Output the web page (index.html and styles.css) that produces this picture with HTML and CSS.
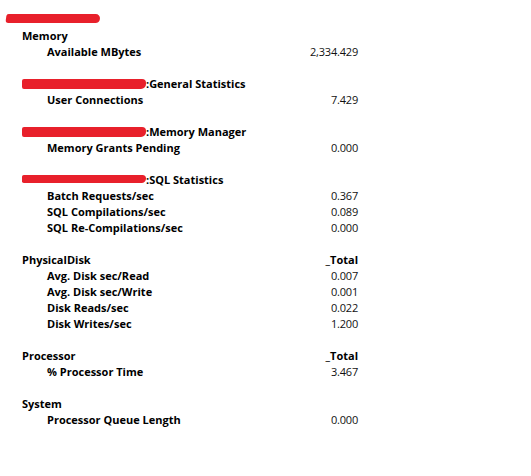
FILE: index.html
```html
<!DOCTYPE html>
<html>
<head>
<meta charset="utf-8">
<link rel="stylesheet" href="styles.css">
</head>
<body>
<div class="report">
  <div class="machine"><span class="redact r-machine"></span></div>

  <div class="objects">
    <section class="obj">
      <div class="row head"><span class="name">Memory</span><span class="val"></span></div>
      <div class="row counter"><span class="name">Available MBytes</span><span class="val">2,334.429</span></div>
    </section>

    <section class="obj">
      <div class="row head"><span class="name"><span class="redact r-obj"></span>:General Statistics</span><span class="val"></span></div>
      <div class="row counter"><span class="name">User Connections</span><span class="val">7.429</span></div>
    </section>

    <section class="obj">
      <div class="row head"><span class="name"><span class="redact r-obj"></span>:Memory Manager</span><span class="val"></span></div>
      <div class="row counter"><span class="name">Memory Grants Pending</span><span class="val">0.000</span></div>
    </section>

    <section class="obj">
      <div class="row head"><span class="name"><span class="redact r-obj r-sql"></span>:SQL Statistics</span><span class="val"></span></div>
      <div class="row counter"><span class="name">Batch Requests/sec</span><span class="val">0.367</span></div>
      <div class="row counter"><span class="name">SQL Compilations/sec</span><span class="val">0.089</span></div>
      <div class="row counter"><span class="name">SQL Re-Compilations/sec</span><span class="val">0.000</span></div>
    </section>

    <section class="obj">
      <div class="row head"><span class="name">PhysicalDisk</span><span class="val inst">_Total</span></div>
      <div class="row counter"><span class="name">Avg. Disk sec/Read</span><span class="val">0.007</span></div>
      <div class="row counter"><span class="name">Avg. Disk sec/Write</span><span class="val">0.001</span></div>
      <div class="row counter"><span class="name">Disk Reads/sec</span><span class="val">0.022</span></div>
      <div class="row counter"><span class="name">Disk Writes/sec</span><span class="val">1.200</span></div>
    </section>

    <section class="obj">
      <div class="row head"><span class="name">Processor</span><span class="val inst">_Total</span></div>
      <div class="row counter"><span class="name">% Processor Time</span><span class="val">3.467</span></div>
    </section>

    <section class="obj">
      <div class="row head"><span class="name">System</span><span class="val"></span></div>
      <div class="row counter"><span class="name">Processor Queue Length</span><span class="val">0.000</span></div>
    </section>
  </div>
</div>
</body>
</html>
```

FILE: styles.css
```css
html, body {
  margin: 0;
  padding: 0;
  background: #ffffff;
}

body {
  font-family: "Open Sans", "Noto Sans", "DejaVu Sans", sans-serif;
  font-size: 11px;
  color: #000000;
}

.report {
  width: 358px;
  padding-top: 10px;
}

.machine {
  height: 16px;
  padding-left: 6px;
  margin-bottom: 2px;
  display: flex;
  align-items: center;
}

.objects {
  display: flex;
  flex-direction: column;
  gap: 16px;
}

.obj {
  display: flex;
  flex-direction: column;
}

.row {
  height: 16px;
  line-height: 16px;
  display: flex;
  justify-content: space-between;
  white-space: nowrap;
}

.name {
  font-weight: 700;
  display: flex;
  align-items: center;
}

.head .name {
  padding-left: 22px;
}

.counter .name {
  padding-left: 47px;
}

.val {
  font-weight: 400;
  color: #111;
  letter-spacing: -0.2px;
}

.val.inst {
  font-weight: 700;
  color: #000;
  letter-spacing: 0;
}

.redact {
  display: inline-block;
  background: #e8202b;
}

.r-machine {
  width: 94px;
  height: 9px;
  border-radius: 2px 5px 4px 3px;
  transform: skewX(-8deg);
}

.r-obj {
  width: 124px;
  height: 10px;
  border-radius: 2px 4px 5px 2px;
}

.r-sql {
  height: 8px;
  margin-top: -2px;
}
```
